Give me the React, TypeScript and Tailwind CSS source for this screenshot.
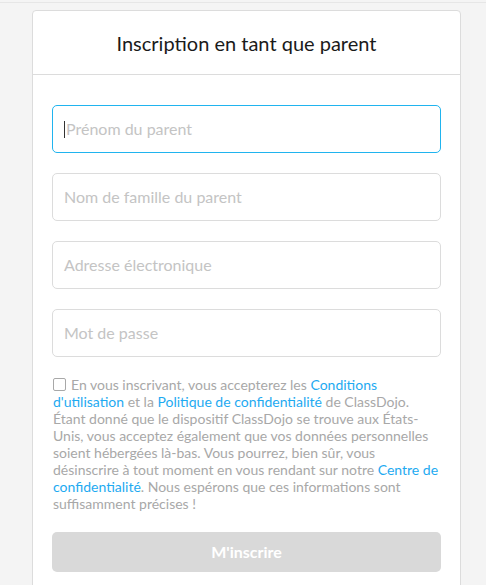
import React from "react";

const fields = [
  { label: "Prénom du parent", focused: true },
  { label: "Nom de famille du parent" },
  { label: "Adresse électronique" },
  { label: "Mot de passe" },
];

export default function App() {
  return (
    <div
      className="min-h-[585px] w-full bg-[#f4f4f4] pt-[2px]"
      style={{ fontFamily: "Lato, 'Open Sans', sans-serif" }}
    >
      <div className="border-t border-[#e6e6e6] pt-[7px]">
        <div className="ml-[32px] w-[429px] rounded-[4px] border border-[#dcdcdc] bg-white">
          <div className="flex h-[64px] items-center justify-center border-b border-[#dcdcdc]">
            <h1 className="text-[20px] text-[#1a1a1a]">Inscription en tant que parent</h1>
          </div>

          <div className="px-[19px] pt-[30px]">
            <div className="flex flex-col gap-[20px]">
              {fields.map((f) => (
                <div
                  key={f.label}
                  className={`flex h-[48px] items-center rounded-[5px] border px-[11px] text-[16px] ${
                    f.focused ? "border-[#20b4ef]" : "border-[#dcdcdc]"
                  }`}
                >
                  {f.focused && <span className="mr-[1px] h-[17px] w-px bg-[#333]" />}
                  <span className="text-[#c4c4c4]">{f.label}</span>
                </div>
              ))}
            </div>

            <p className="mt-[19px] pl-[1px] text-[14px] leading-[17px] text-[#a8a8a8]">
              <span className="mr-[5px] inline-block h-[13px] w-[13px] rounded-[2px] border border-[#a8a8a8] align-[-1px]" />
              En vous inscrivant, vous accepterez les{" "}
              <a className="text-[#1eaaf1]">Conditions d'utilisation</a> et la{" "}
              <a className="text-[#1eaaf1]">Politique de confidentialité</a> de ClassDojo. Étant donné que le
              dispositif ClassDojo se trouve aux États-Unis, vous acceptez également que vos données personnelles
              soient hébergées là-bas. Vous pourrez, bien sûr, vous désinscrire à tout moment en vous rendant sur
              notre <a className="text-[#1eaaf1]">Centre de confidentialité</a>. Nous espérons que ces informations
              sont suffisamment précises !
            </p>

            <button className="mt-[20px] flex h-[40px] w-full items-center justify-center rounded-[5px] bg-[#d9d9d9] text-[16px] font-bold text-white">
              M'inscrire
            </button>
            <div className="h-[20px]" />
          </div>
        </div>
      </div>
    </div>
  );
}
